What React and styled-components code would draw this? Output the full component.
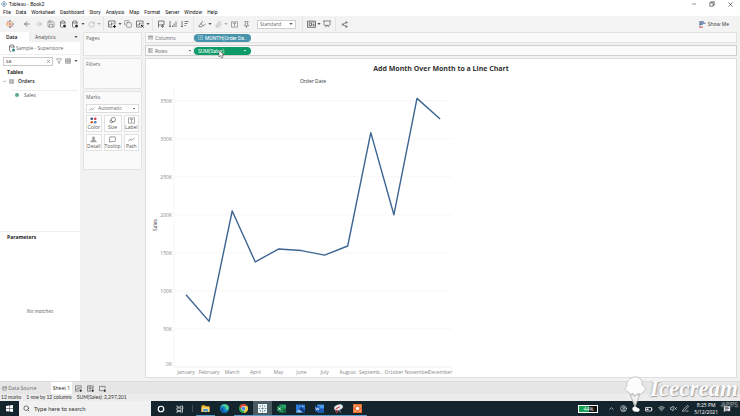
import React from "react";
import styled, { createGlobalStyle } from "styled-components";
import {
  ArrowLeft,
  ArrowRight,
  ChevronDown,
  ChevronUp,
  CircleUser,
  Cloud,
  Copy,
  Database,
  Funnel,
  Highlighter,
  MessageSquare,
  MessageSquareText,
  Minus,
  Paperclip,
  PenLine,
  Pin,
  Presentation,
  RotateCw,
  Save,
  Search,
  Share2,
  VolumeX,
  Wifi,
  X,
} from "lucide-react";

const menus = [
  "File",
  "Data",
  "Worksheet",
  "Dashboard",
  "Story",
  "Analysis",
  "Map",
  "Format",
  "Server",
  "Window",
  "Help",
];

const sales = [
  { month: "January", value: 95 },
  { month: "February", value: 60 },
  { month: "March", value: 205 },
  { month: "April", value: 138 },
  { month: "May", value: 155 },
  { month: "June", value: 153 },
  { month: "July", value: 147 },
  { month: "August", value: 159 },
  { month: "Septemb..", value: 308 },
  { month: "October", value: 200 },
  { month: "November", value: 353 },
  { month: "December", value: 326 },
];

const ticks = [350, 300, 250, 200, 150, 100, 50, 0];

/* small drawings, all on a 16 unit grid */

const Glyph = ({ size = 8, color = "#555", children }) => (
  <svg
    width={size}
    height={size}
    viewBox="0 0 16 16"
    fill="none"
    stroke={color}
    strokeWidth="1.5"
    aria-hidden="true"
  >
    {children}
  </svg>
);

const TableauLogo = ({ size, muted }) => (
  <Glyph size={size}>
    <path d="M8 5v6M5 8h6" stroke={muted ? "#4a7fa8" : "#e8762c"} strokeWidth="2" />
    <path d="M8 0v4M6 2h4" stroke="#5b879b" />
    <path d="M8 12v4M6 14h4" stroke="#5b6591" />
    <path d="M2 6v4M0 8h4" stroke={muted ? "#5b879b" : "#eb912c"} />
    <path d="M14 6v4M12 8h4" stroke={muted ? "#5b879b" : "#7099a6"} />
    <path d="M4 3v2M3 4h2" stroke={muted ? "#6fa3bd" : "#c72035"} />
    <path d="M12 3v2M11 4h2" stroke={muted ? "#6fa3bd" : "#eb912c"} />
    <path d="M4 11v2M3 12h2" stroke={muted ? "#6fa3bd" : "#eb912c"} />
    <path d="M12 11v2M11 12h2" stroke={muted ? "#6fa3bd" : "#c72035"} />
  </Glyph>
);

const DataSourceIcon = ({ accent = "#333" }) => (
  <Glyph>
    <path d="M3 4c0-3 9-3 9 0v4M3 4v9c0 1 2 2 4 2M3 4c0 3 9 3 9 0" />
    <circle cx="11" cy="12" r="3" fill={accent} stroke="none" />
  </Glyph>
);

const SheetIcon = ({ size, cross }) => (
  <Glyph size={size}>
    <path d="M14 9V2H1v12h8M4 11V8M7 11V5M10 9V6" />
    <path d={cross ? "M10 10l5 5M15 10l-5 5" : "M13 10v6M10 13h6"} stroke="#222" strokeWidth="2" />
  </Glyph>
);

const DashboardIcon = () => (
  <Glyph size={7}>
    <path d="M14 9V2H1v12h8M1 7h13M7 2v12" />
    <path d="M13 10v6M10 13h6" stroke="#222" strokeWidth="2" />
  </Glyph>
);

const StoryIcon = () => (
  <Glyph size={7}>
    <path d="M14 8V3H9L8 5 7 3H1v10h8" />
    <path d="M13 10v6M10 13h6" stroke="#222" strokeWidth="2" />
  </Glyph>
);

const SwapIcon = () => (
  <Glyph>
    <path d="M3 15V2h11v8H3M11 8v6M8 12l3 3 3-3" />
  </Glyph>
);

const SortIcon = ({ down }) => (
  <Glyph>
    <path
      d={
        down
          ? "M2 2v12M0 12l2 2 2-2M7 3h8M7 7h6M7 11h3"
          : "M2 2v12M0 12l2 2 2-2M7 14v-3M10 14V7M14 14V3"
      }
    />
  </Glyph>
);

const LabelIcon = ({ size = 7 }) => (
  <Glyph size={size} color="#777">
    <path d="M1 2h14v12H1zM5 6V5h6v1M8 5v6M7 11h2" />
  </Glyph>
);

const FitIcon = () => (
  <Glyph size={9}>
    <path d="M1 2h14v11H1zM4 5h4v5H4zM10 5h3M10 8h3M10 10h3" />
  </Glyph>
);

const GridIcon = ({ size = 6 }) => (
  <Glyph size={size} color="#777">
    <path d="M1 2h14v12H1zM1 6h14M1 10h14M6 2v12M11 2v12" />
  </Glyph>
);

const ExpandIcon = () => (
  <Glyph size={5} color="#d9edf4">
    <path d="M1 1h14v14H1zM5 8h6M8 5v6" />
  </Glyph>
);

const ColumnsIcon = () => (
  <Glyph size={5} color="#666">
    <path d="M2 1v14M6 1v14M10 1v14M14 1v14M1 5h14" />
  </Glyph>
);

const RowsIcon = () => (
  <Glyph size={5} color="#666">
    <path d="M1 2h14M1 6h14M1 10h14M1 14h14M4 1v14" />
  </Glyph>
);

const LineIcon = ({ size = 6 }) => (
  <Glyph size={size} color="#666">
    <path d="M1 12l4-5 4 3 6-6" />
  </Glyph>
);

const ColorIcon = () => (
  <Glyph size={7}>
    <g stroke="none">
      <circle cx="4" cy="4" r="3" fill="#35507a" />
      <circle cx="12" cy="4" r="3" fill="#d2394a" />
      <circle cx="4" cy="12" r="3" fill="#e4622c" />
      <circle cx="12" cy="12" r="3" fill="#4d86b0" />
    </g>
  </Glyph>
);

const SizeIcon = () => (
  <Glyph size={7}>
    <circle cx="10" cy="6" r="5" />
    <path d="M5 6c-4 1-4 7 0 7 3 0 5-1 5-4" />
  </Glyph>
);

const DetailIcon = () => (
  <Glyph size={7}>
    <path d="M1 13h14M3 10h10M5 7h6" />
    <circle cx="8" cy="4" r="2" />
  </Glyph>
);

const ShowMeIcon = () => (
  <Glyph size={7}>
    <path d="M1 2h10M1 5h14M1 8h7" stroke="#54719b" strokeWidth="2.4" />
    <path d="M2 1v13" stroke="#8494ad" strokeWidth="2" />
    <path d="M1 14h8" stroke="#d8434c" strokeWidth="2.4" />
  </Glyph>
);

const Restore = () => (
  <Glyph size={6} color="#222">
    <path d="M2 5h9v9H2zM5 5V2h9v9h-3" />
  </Glyph>
);

const WindowsLogo = () => (
  <Glyph size={7}>
    <path
      d="M0 2l7-1v6.5H0zM8 1l8-1v7.5H8zM0 8.5h7V15l-7-1zM8 8.5h8V16l-8-1z"
      fill="#fff"
      stroke="none"
    />
  </Glyph>
);

const CortanaIcon = () => (
  <Glyph size={8} color="#fff">
    <circle cx="8" cy="8" r="5.5" strokeWidth="2.4" />
  </Glyph>
);

const TaskViewIcon = () => (
  <Glyph size={8} color="#dfe5e8">
    <path d="M2 1v3h8V1M2 6h8v5H2zM2 16v-3h8v3M13 1v14M12 6h3" />
  </Glyph>
);

const BatteryIcon = () => (
  <Glyph size={8} color="#fff">
    <path d="M1 5h12v7H1zM14 7v3" />
    <path d="M3 7h4v3H3z" fill="#fff" stroke="none" />
  </Glyph>
);

const apps = [
  {
    name: "File Explorer",
    open: true,
    art: (
      <g stroke="none">
        <path d="M1 2h6l1 2h7v10H1z" fill="#f0b429" />
        <path d="M1 6h14v8H1z" fill="#fbdc74" />
        <path d="M4 9h8v5h-2v-2H6v2H4z" fill="#3a8fd6" />
      </g>
    ),
  },
  {
    name: "Edge",
    art: (
      <g stroke="none">
        <circle cx="8" cy="8" r="8" fill="#1686c9" />
        <path d="M1 5C4-2 16-1 16 7c0 4-6 4-6 2 1-5-6-7-9-4z" fill="#4fd08a" />
        <path d="M6 8c-1 5 4 7 8 5-4 5-13 2-13-4 1-3 4-3 5-1z" fill="#0c59a4" />
      </g>
    ),
  },
  {
    name: "Chrome",
    open: true,
    art: (
      <g stroke="none">
        <circle cx="8" cy="8" r="8" fill="#2fa652" />
        <path d="M1 4a8 8 0 0 1 14 0H8L5 10z" fill="#e24236" />
        <path d="M15 4a8 8 0 0 1-7 12l4-7-4-5z" fill="#f8c92f" />
        <circle cx="8" cy="8" r="4" fill="#fff" />
        <circle cx="8" cy="8" r="3" fill="#3f83f1" />
      </g>
    ),
  },
  {
    name: "Tableau",
    open: true,
    active: true,
    art: (
      <>
        <path d="M0 0h16v16H0z" fill="#f3f6f7" stroke="none" />
        <path
          d="M8 6v4M6 8h4M8 1v3M8 12v3M1 8h3M12 8h3M4 3v2M3 4h2M12 3v2M11 4h2M4 11v2M3 12h2M12 11v2M11 12h2"
          stroke="#4f8499"
        />
      </>
    ),
  },
  {
    name: "Excel",
    open: true,
    art: (
      <>
        <path d="M4 1h12v14H4z" fill="#27a467" stroke="none" />
        <path d="M10 8h6v7h-6z" fill="#156b3d" stroke="none" />
        <path d="M0 4h9v9H0z" fill="#107c41" stroke="none" />
        <path d="M2 6l5 5M7 6l-5 5" stroke="#fff" />
      </>
    ),
  },
  {
    name: "Photos",
    open: true,
    art: (
      <g stroke="none">
        <path d="M0 1h16v14H0z" fill="#2c7cd8" />
        <path d="M0 15l6-6 7 6z" fill="#8cc6f5" />
        <path d="M5 9l5-4 6 6v4h-4z" fill="#123f8c" />
        <circle cx="12" cy="4" r="1" fill="#fff" />
      </g>
    ),
  },
  {
    name: "Word",
    open: true,
    art: (
      <>
        <path d="M4 1h12v14H4z" fill="#4b9be8" stroke="none" />
        <path d="M4 8h12v7H4z" fill="#1c57b5" stroke="none" />
        <path d="M0 4h9v9H0z" fill="#185abd" stroke="none" />
        <path d="M1 6l2 5 1-4 2 4 1-5" stroke="#fff" strokeWidth="1" />
      </>
    ),
  },
  {
    name: "Snipping Tool",
    open: true,
    art: (
      <>
        <ellipse cx="8" cy="6" rx="8" ry="5" fill="#e7eaee" stroke="none" transform="rotate(-20 8 6)" />
        <path d="M3 9l7-4" stroke="#cf4a4a" strokeWidth="2" />
        <circle cx="5" cy="13" r="2" stroke="#d65050" />
        <path d="M9 10l3 5" stroke="#9fb4c4" />
      </>
    ),
  },
  {
    name: "Screen Recorder",
    open: true,
    art: (
      <>
        <path d="M0 0h16v16H0z" fill="#ee6c2b" stroke="none" />
        <circle cx="8" cy="8" r="3" fill="#fff" stroke="none" />
        <path d="M3 6V3h3M10 3h3v3M13 10v3h-3M6 13H3v-3" stroke="#ffc7a3" />
      </>
    ),
  },
];

const marks = [
  { label: "Color", icon: <ColorIcon /> },
  { label: "Size", icon: <SizeIcon /> },
  { label: "Label", icon: <LabelIcon /> },
  { label: "Detail", icon: <DetailIcon /> },
  { label: "Tooltip", icon: <MessageSquare size={7} color="#555" /> },
  { label: "Path", icon: <LineIcon size={7} /> },
];

function Chart() {
  const x = (i) => 40 + i * 23.1;
  const y = (v) => 291 - v * 0.761;
  return (
    <ChartSvg width="310" height="301" role="img" aria-label="Sales by month">
      <text x="167" y="7" textAnchor="middle" fill="#333">
        Order Date
      </text>
      <text x="-149" y="11" textAnchor="middle" fill="#333" transform="rotate(-90)">
        Sales
      </text>
      {ticks.map((t) => (
        <g key={t}>
          <line x1="28" x2="306" y1={y(t)} y2={y(t)} stroke={t ? "#f7f7f7" : "#efefef"} />
          <text x="26" y={t ? y(t) + 2 : y(t) - 1} textAnchor="end">
            {t}K
          </text>
        </g>
      ))}
      <line x1="28" x2="28" y1="10" y2="291" stroke="#f5f5f5" />
      <polyline
        points={sales.map((s, i) => `${x(i)},${y(s.value)}`).join(" ")}
        fill="none"
        stroke="#3c6591"
        strokeWidth="1.4"
        strokeLinejoin="round"
      />
      {sales.map((s, i) => (
        <text key={s.month} x={x(i)} y="298" textAnchor="middle">
          {s.month}
        </text>
      ))}
    </ChartSvg>
  );
}

export default function App() {
  return (
    <>
      <GlobalStyle />
      <Window>
        <TitleBar>
          <TableauLogo size={6} muted />
          <span>Tableau - Book2</span>
          <WindowControls>
            <IconButton aria-label="Minimize">
              <Minus size={6} color="#222" />
            </IconButton>
            <IconButton aria-label="Restore">
              <Restore />
            </IconButton>
            <IconButton aria-label="Close">
              <X size={7} color="#222" />
            </IconButton>
          </WindowControls>
        </TitleBar>

        <MenuBar>
          {menus.map((m) => (
            <MenuItem key={m}>{m}</MenuItem>
          ))}
        </MenuBar>

        <Toolbar>
          <ToolButton aria-label="Start page"><TableauLogo size={8} /></ToolButton>
          <Separator />
          <ToolButton aria-label="Undo"><ArrowLeft size={8} /></ToolButton>
          <ToolButton aria-label="Redo" $dim><ArrowRight size={8} /></ToolButton>
          <ToolButton aria-label="Save"><Save size={8} strokeWidth={1.5} /></ToolButton>
          <ToolButton aria-label="New data source"><DataSourceIcon /></ToolButton>
          <ToolButton aria-label="Pause updates"><DataSourceIcon /></ToolButton>
          <Caret />
          <ToolButton aria-label="Run update" $dim><RotateCw size={7} /></ToolButton>
          <Caret $dim />
          <Separator $line />
          <ToolButton aria-label="New worksheet"><SheetIcon /></ToolButton>
          <Caret />
          <ToolButton aria-label="Duplicate"><Copy size={8} strokeWidth={1.5} /></ToolButton>
          <ToolButton aria-label="Clear sheet"><SheetIcon cross /></ToolButton>
          <Caret />
          <Separator $line />
          <ToolButton aria-label="Swap rows and columns"><SwapIcon /></ToolButton>
          <ToolButton aria-label="Sort ascending"><SortIcon /></ToolButton>
          <ToolButton aria-label="Sort descending"><SortIcon down /></ToolButton>
          <Separator $line />
          <ToolButton aria-label="Highlight"><Highlighter size={8} /></ToolButton>
          <Caret />
          <ToolButton aria-label="Group members" $dim><Paperclip size={7} /></ToolButton>
          <Caret $dim />
          <ToolButton aria-label="Show mark labels"><LabelIcon /></ToolButton>
          <ToolButton aria-label="Fix axes"><Pin size={7} /></ToolButton>
          <FitField>
            <FieldSelect aria-label="Fit" defaultValue="Standard">
              <option>Standard</option>
              <option>Entire View</option>
            </FieldSelect>
            <Caret />
          </FitField>
          <Separator $line />
          <ToolButton aria-label="Show or hide cards"><FitIcon /></ToolButton>
          <Caret />
          <ToolButton aria-label="Presentation mode"><Presentation size={8} /></ToolButton>
          <Separator $line />
          <ToolButton aria-label="Share"><Share2 size={7} /></ToolButton>
          <ShowMe>
            <ShowMeIcon />
            Show Me
          </ShowMe>
        </Toolbar>

        <Workspace>
          <DataPane>
            <PaneTabs>
              <PaneTab $active>Data</PaneTab>
              <PaneTab>Analytics</PaneTab>
              <Caret />
            </PaneTabs>
            <SourceRow>
              <DataSourceIcon accent="#2f7f8c" />
              Sample - Superstore
            </SourceRow>
            <SearchRow>
              <SearchField>
                <SearchInput aria-label="Search fields" defaultValue="sa" />
                <IconButton aria-label="Clear search">
                  <X size={5} color="#444" />
                </IconButton>
              </SearchField>
              <Funnel size={6} color="#666" />
              <GridIcon size={6} />
              <Caret />
            </SearchRow>
            <Fields>
              <PaneHeading>Tables</PaneHeading>
              <TableRow>
                <ChevronDown size={5} color="#444" />
                <GridIcon size={5} />
                Orders
              </TableRow>
              <FieldRow>
                <MeasureDot />
                Sales
              </FieldRow>
            </Fields>
            <Parameters>
              <PaneHeading>Parameters</PaneHeading>
              <NoMatches>No matches</NoMatches>
            </Parameters>
          </DataPane>

          <Cards>
            <Card $height={24}>Pages</Card>
            <Card $height={31}>Filters</Card>
            <Card $height={79}>
              Marks
              <MarkField>
                <LineIcon />
                <FieldSelect aria-label="Mark type" defaultValue="Automatic">
                  <option>Automatic</option>
                  <option>Line</option>
                </FieldSelect>
                <Caret />
              </MarkField>
              <MarkGrid>
                {marks.map((m) => (
                  <MarkButton key={m.label}>
                    {m.icon}
                    {m.label}
                  </MarkButton>
                ))}
              </MarkGrid>
            </Card>
          </Cards>

          <View>
            <Shelf>
              <ShelfLabel>
                <ColumnsIcon />
                Columns
              </ShelfLabel>
              <Pill $color="#4793ac">
                <ExpandIcon />
                <span>MONTH(Order Da..</span>
              </Pill>
            </Shelf>
            <Shelf $hover>
              <ShelfLabel>
                <RowsIcon />
                Rows
                <Caret />
              </ShelfLabel>
              <Pill $color="#0c9b66">
                <span>SUM(Sales)</span>
                <Caret $light />
                <Cursor width="7" height="9" viewBox="0 0 14 18">
                  <path d="M2 1v13l3-3 2 5 3-1-2-5h4z" fill="#fff" stroke="#333" />
                </Cursor>
              </Pill>
            </Shelf>
            <Sheet>
              <SheetTitle>Add Month Over Month to a Line Chart</SheetTitle>
              <Chart />
            </Sheet>
          </View>
        </Workspace>

        <SheetTabs>
          <SheetTab $wide>
            <Database size={5} />
            Data Source
          </SheetTab>
          <SheetTab $active>Sheet 1</SheetTab>
          <ToolButton aria-label="New worksheet tab"><SheetIcon size={7} /></ToolButton>
          <ToolButton aria-label="New dashboard tab"><DashboardIcon /></ToolButton>
          <ToolButton aria-label="New story tab"><StoryIcon /></ToolButton>
        </SheetTabs>

        <StatusBar>
          <span>12 marks</span>
          <span>1 row by 12 columns</span>
          <span>SUM(Sales): 2,297,201</span>
        </StatusBar>

        <Taskbar>
          <TaskButton aria-label="Start"><WindowsLogo /></TaskButton>
          <TaskSearch>
            <Search size={7} color="#222" />
            <TaskInput aria-label="Search" placeholder="Type here to search" />
          </TaskSearch>
          <TaskButton aria-label="Cortana"><CortanaIcon /></TaskButton>
          <TaskButton aria-label="Task view"><TaskViewIcon /></TaskButton>
          <TaskDivider />
          {apps.map((a) => (
            <TaskButton key={a.name} aria-label={a.name} $open={a.open} $active={a.active}>
              <Glyph size={9}>{a.art}</Glyph>
            </TaskButton>
          ))}
          <Tray>
            <Battery>
              <span>44</span>%
            </Battery>
            <ChevronUp size={7} />
            <CircleUser size={7} />
            <Cloud size={8} fill="#fff" />
            <BatteryIcon />
            <Wifi size={7} />
            <VolumeX size={7} />
            <PenLine size={7} />
            <Clock>
              <span>8:25 PM</span>
              <span>5/12/2021</span>
            </Clock>
            <MessageSquareText size={8} fill="#fff" stroke="#16262f" />
          </Tray>
        </Taskbar>

        <Watermark>
          <svg width="26" height="32" viewBox="0 0 26 32">
            <path
              d="M12 1c5-1 9 3 8 8 4 1 4 6 1 7-1 3-4 2-5 1-1 3-4 3-5 0-2 2-4 1-4-1-4 0-5-4-2-6-1-5 3-8 7-9z"
              fill="#fff"
              stroke="#c4c4c4"
            />
            <path d="M8 18l5 13 5-13c-2 2-3 1-3 0-2 3-3 3-5 0 0 1-1 1-2 0z" fill="#f2f2f2" stroke="#b5b5b5" />
          </svg>
          <Brand>
            Icecream
            <small>APPS</small>
          </Brand>
        </Watermark>
      </Window>
    </>
  );
}

const GlobalStyle = createGlobalStyle`
  * {
    box-sizing: border-box;
  }
  body {
    margin: 0;
    background: #f2f2f2;
    color: #333;
    font-family: "Open Sans", "Noto Sans", sans-serif;
    font-size: 5px;
    line-height: 8px;
  }
  button, input, select {
    margin: 0;
    padding: 0;
    border: 0;
    background: none;
    color: inherit;
    font: inherit;
  }
  svg {
    flex: none;
  }
`;

const Window = styled.div`
  position: relative;
  display: flex;
  flex-direction: column;
  height: 100vh;
  overflow: hidden;
`;

const TitleBar = styled.header`
  display: flex;
  align-items: center;
  gap: 2px;
  height: 8px;
  padding-left: 1px;
  background: #fff;
  color: #111;
  font-family: Lato, sans-serif;
`;

const WindowControls = styled.div`
  display: flex;
  gap: 10px;
  margin-left: auto;
  padding-right: 6px;
`;

const IconButton = styled.button`
  display: grid;
  place-items: center;
  width: 8px;
  height: 8px;
`;

const MenuBar = styled.nav`
  display: flex;
  gap: 5px;
  height: 8px;
  padding: 1px 0 0 3px;
  background: #fff;
  color: #111;
  font-family: Roboto, sans-serif;
`;

const MenuItem = styled.button`
  line-height: 7px;
`;

const Toolbar = styled.div`
  display: flex;
  align-items: center;
  height: 16px;
  padding: 0 11px 0 4px;
  background: #f3f3f4;
`;

const ToolButton = styled.button`
  display: grid;
  place-items: center;
  width: 12px;
  height: 12px;
  flex: none;
  color: ${(p) => (p.$dim ? "#aaa" : "#555")};
`;

const Separator = styled.i`
  width: 5px;
  height: 14px;
  flex: none;
  background: ${(p) =>
    p.$line ? "linear-gradient(#e4e4e4, #e4e4e4) center / 1px 100% no-repeat" : "none"};
`;

const Caret = styled.i`
  width: 4px;
  height: 2px;
  flex: none;
  background: ${(p) => (p.$light ? "#fff" : p.$dim ? "#aaa" : "#555")};
  clip-path: polygon(10% 0, 90% 0, 50% 100%);
`;

const FitField = styled.div`
  display: flex;
  align-items: center;
  width: 39px;
  height: 9px;
  margin: 0 4px 0 5px;
  padding: 0 2px;
  border: 1px solid #cfcfcf;
  background: #fff;
`;

const FieldSelect = styled.select`
  appearance: none;
  flex: 1;
  min-width: 0;
  height: 7px;
  line-height: 7px;
  color: #666;
`;

const ShowMe = styled.button`
  display: flex;
  align-items: center;
  gap: 2px;
  margin-left: auto;
`;

const Workspace = styled.main`
  display: flex;
  flex: 1;
  min-height: 0;
  gap: 3px;
  padding-right: 3px;
`;

const DataPane = styled.aside`
  display: flex;
  flex-direction: column;
  width: 80px;
  flex: none;
  background: #fff;
`;

const PaneTabs = styled.div`
  display: flex;
  align-items: center;
  height: 10px;
  padding-right: 2px;
  background: #f1f1f1;
`;

const PaneTab = styled.button`
  width: ${(p) => (p.$active ? 29 : 34)}px;
  height: 10px;
  padding-left: 6px;
  background: ${(p) => (p.$active ? "#fff" : "none")};
  color: ${(p) => (p.$active ? "#111" : "#444")};
  font-weight: ${(p) => (p.$active ? 600 : 400)};
  text-align: left;

  & + & {
    margin-right: auto;
  }
`;

const SourceRow = styled.div`
  display: flex;
  align-items: center;
  height: 13px;
  padding-left: 8px;
  border-bottom: 1px solid #f0f0f0;
  color: #666;
`;

const SearchRow = styled.div`
  display: flex;
  align-items: center;
  gap: 3px;
  height: 12px;
  padding-left: 3px;
`;

const SearchField = styled.div`
  display: flex;
  align-items: center;
  width: 50px;
  height: 9px;
  border: 1px solid #c8c8c8;
`;

const SearchInput = styled.input`
  flex: 1;
  min-width: 0;
  padding-left: 2px;
  outline: none;
`;

const Fields = styled.section`
  flex: 11;
`;

const Parameters = styled.section`
  display: flex;
  flex-direction: column;
  flex: 10;
  border-top: 1px solid #eee;
`;

const PaneHeading = styled.h2`
  margin: 0;
  padding-left: 7px;
  font-size: 5px;
  font-weight: 700;
  line-height: 10px;
  color: #222;
`;

const TableRow = styled.div`
  display: flex;
  align-items: center;
  gap: 2px;
  padding-left: 2px;
  font-weight: 600;
  color: #222;

  svg + svg {
    margin-right: 2px;
  }
`;

const FieldRow = styled.div`
  display: flex;
  align-items: center;
  gap: 5px;
  margin: 5px 2px 0 12px;
  padding-left: 3px;
  border-top: 1px solid #eee;
  color: #555;
`;

const MeasureDot = styled.i`
  width: 4px;
  height: 4px;
  border-radius: 50%;
  background: #54a88c;
`;

const NoMatches = styled.p`
  margin: auto;
  color: #666;
  font-style: italic;
`;

const Cards = styled.aside`
  display: flex;
  flex-direction: column;
  width: 59px;
  flex: none;
  gap: 2px;
`;

const Card = styled.section`
  min-height: ${(p) => p.$height}px;
  padding: 1px 2px;
  border: 1px solid #e4e4e4;
  background: #fafafa;
  color: #666;
`;

const MarkField = styled.div`
  display: flex;
  align-items: center;
  gap: 3px;
  height: 9px;
  margin: 3px 0 2px;
  padding: 0 2px;
  border: 1px solid #dcdcdc;
  background: #fff;
`;

const MarkGrid = styled.div`
  display: grid;
  grid-template-columns: repeat(3, 1fr);
  gap: 2px;
`;

const MarkButton = styled.button`
  display: flex;
  flex-direction: column;
  align-items: center;
  justify-content: center;
  height: 17px;
  border: 1px solid #e2e2e2;
  background: #fff;
  color: #555;
  line-height: 7px;
`;

const View = styled.section`
  display: flex;
  flex-direction: column;
  flex: 1;
  min-width: 0;
  gap: 2px;
  padding-bottom: 3px;
`;

const Shelf = styled.div`
  display: flex;
  align-items: center;
  height: 11px;
  border: 1px solid ${(p) => (p.$hover ? "#cfcfcf" : "#e2e2e2")};
  background: #fafafa;
`;

const ShelfLabel = styled.div`
  display: flex;
  align-items: center;
  gap: 2px;
  width: 48px;
  flex: none;
  padding: 0 1px 0 2px;
  border-right: 1px solid #e4e4e4;
  color: #666;

  i {
    margin-left: auto;
  }
`;

const Pill = styled.div`
  position: relative;
  display: flex;
  align-items: center;
  gap: 2px;
  width: 57px;
  height: 8px;
  padding: 0 4px;
  border-radius: 4px;
  background: ${(p) => p.$color};
  color: #fff;
  font-family: Roboto, sans-serif;
  white-space: nowrap;

  i {
    margin-left: auto;
  }
`;

const Cursor = styled.svg`
  position: absolute;
  left: 24px;
  top: 3px;
`;

const Sheet = styled.article`
  flex: 1;
  min-height: 0;
  border: 1px solid #dedede;
  background: #fff;
`;

const SheetTitle = styled.h1`
  margin: 0;
  padding: 5px 0 2px;
  font-size: 7px;
  font-weight: 700;
  line-height: 10px;
  text-align: center;
`;

const ChartSvg = styled.svg`
  display: block;

  text {
    fill: #888;
  }
  text[fill] {
    fill: #333;
  }
`;

const SheetTabs = styled.nav`
  display: flex;
  align-items: center;
  height: 13px;
  border-top: 1px solid #dcdcdc;
  background: #e6e6e6;
`;

const SheetTab = styled.button`
  display: flex;
  align-items: center;
  justify-content: center;
  gap: 1px;
  width: ${(p) => (p.$wide ? 51 : 21)}px;
  height: 12px;
  padding-right: ${(p) => (p.$wide ? 12 : 0)}px;
  background: ${(p) => (p.$active ? "#fff" : "none")};
  color: ${(p) => (p.$active ? "#222" : "#666")};
`;

const StatusBar = styled.footer`
  display: flex;
  gap: 5px;
  height: 7px;
  padding-left: 1px;
  background: #ececec;
  font-family: Lato, sans-serif;
  line-height: 7px;
`;

const Taskbar = styled.footer`
  display: flex;
  align-items: center;
  height: 15px;
  background: #15252e;
`;

const TaskButton = styled.button`
  display: grid;
  place-items: center;
  width: 19px;
  height: 15px;
  flex: none;
  background: ${(p) => (p.$active ? "#4b5b64" : "none")};
  box-shadow: ${(p) => (p.$open ? "inset 0 -1px #5d9fcb" : "none")};
`;

const TaskSearch = styled.label`
  display: flex;
  align-items: center;
  gap: 4px;
  width: 132px;
  height: 15px;
  padding-left: 4px;
  background: #f1f1f1;
`;

const TaskInput = styled.input`
  flex: 1;
  min-width: 0;
  font-family: Lato, sans-serif;
  font-size: 6px;

  &::placeholder {
    color: #333;
  }
`;

const TaskDivider = styled.i`
  width: 1px;
  height: 7px;
  margin: 0 3px;
  background: #3e4d55;
`;

const Tray = styled.div`
  display: flex;
  align-items: center;
  gap: 5px;
  margin-left: auto;
  padding-right: 9px;
  color: #fff;
`;

const Battery = styled.div`
  display: flex;
  align-items: center;
  width: 20px;
  height: 8px;
  margin-right: 5px;
  border: 1px solid #fff;
  background: #111;
  line-height: 6px;

  span {
    width: 10px;
    background: #19a052;
    text-align: right;
  }
`;

const Clock = styled.time`
  display: flex;
  flex-direction: column;
  align-items: center;
  line-height: 7px;
`;

const Watermark = styled.div`
  position: absolute;
  right: 2px;
  bottom: 8px;
  display: flex;
  align-items: center;
  gap: 2px;
  pointer-events: none;
  opacity: 0.9;
`;

const Brand = styled.strong`
  display: flex;
  flex-direction: column;
  color: #fff;
  font-family: "Liberation Serif", serif;
  font-size: 23px;
  font-style: italic;
  line-height: 25px;
  text-shadow: 1px 1px 1px #999, -1px 0 1px #bbb;

  small {
    align-self: flex-end;
    font-family: "Open Sans", sans-serif;
    font-size: 7px;
    font-style: normal;
    font-weight: 400;
    line-height: 7px;
    opacity: 0.5;
  }
`;
